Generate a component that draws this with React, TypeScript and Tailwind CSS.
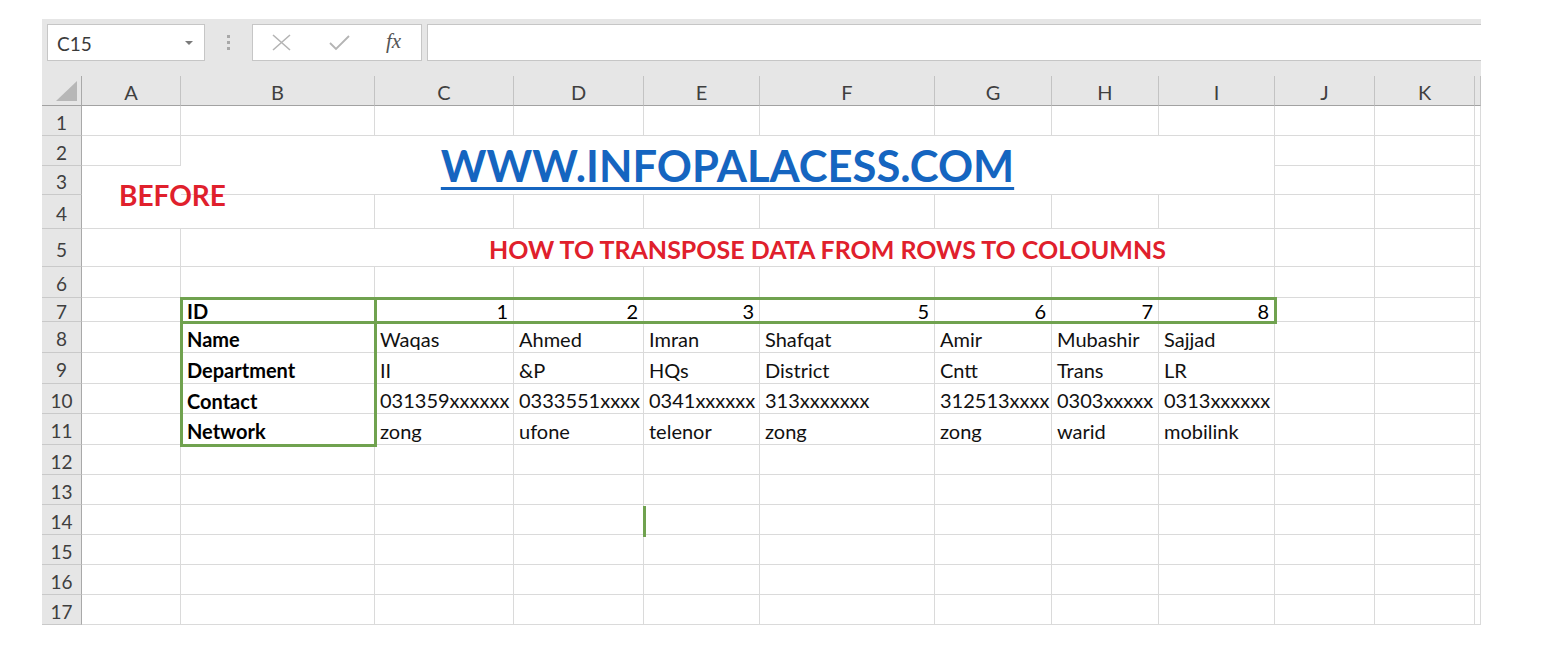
import React from 'react';

const cell = 'border-r border-b border-[#dadada] flex items-center whitespace-nowrap';

function RH({ n }: { n: number }) {
  return (
    <div className="bg-[#e6e6e6] border-r border-r-[#a9a9a9] border-b border-b-[#c9c9c9] flex items-center justify-center pt-[3px] text-[19px] text-[#3f3f3f] leading-none">
      {n}
    </div>
  );
}

function E() {
  return <div className={cell} />;
}

function Empties({ count }: { count: number }) {
  return (
    <>
      {Array.from({ length: count }).map((_, i) => (
        <E key={i} />
      ))}
    </>
  );
}

const headers = ['A', 'B', 'C', 'D', 'E', 'F', 'G', 'H', 'I', 'J', 'K', ''];

const ids = ['1', '2', '3', '5', '6', '7', '8'];
const dataRows: { label: string; vals: string[] }[] = [
  { label: 'Name', vals: ['Waqas', 'Ahmed', 'Imran', 'Shafqat', 'Amir', 'Mubashir', 'Sajjad'] },
  { label: 'Department', vals: ['II', '&P', 'HQs', 'District', 'Cntt', 'Trans', 'LR'] },
  { label: 'Contact', vals: ['031359xxxxxx', '0333551xxxx', '0341xxxxxx', '313xxxxxxx', '312513xxxx', '0303xxxxx', '0313xxxxxx'] },
  { label: 'Network', vals: ['zong', 'ufone', 'telenor', 'zong', 'zong', 'warid', 'mobilink'] },
];

export default function App() {
  return (
    <div className="w-[1552px] h-[665px] bg-white font-['Lato','Open_Sans',sans-serif] text-black overflow-hidden">
      <div className="pt-[19px] pl-[42px]">
        <div className="w-[1439px] bg-[#e6e6e6]">
          {/* formula bar */}
          <div className="flex h-[57px] pt-[5px] items-start">
            <div className="ml-[5px] w-[158px] h-[37px] bg-white border border-[#c6c6c6] flex items-center pl-[9px] pr-[10px]">
              <span className="text-[19px] text-[#3a3a3a] leading-none pt-[2px]">C15</span>
              <svg className="ml-auto" width="10" height="6" viewBox="0 0 10 6">
                <path d="M1 1 L9 1 L5 5 Z" fill="#7a7a7a" />
              </svg>
            </div>
            <div className="w-[47px] h-[37px] flex flex-col items-center justify-center gap-[3px]">
              <div className="w-[3px] h-[3px] bg-[#a8a8a8]" />
              <div className="w-[3px] h-[3px] bg-[#a8a8a8]" />
              <div className="w-[3px] h-[3px] bg-[#a8a8a8]" />
            </div>
            <div className="w-[170px] h-[37px] bg-white border border-[#c6c6c6] flex items-center">
              <svg className="ml-[19px]" width="19" height="17" viewBox="0 0 19 17">
                <path d="M1 1 L18 16 M18 1 L1 16" stroke="#b4b4b4" strokeWidth="1.6" fill="none" />
              </svg>
              <svg className="ml-[38px]" width="21" height="16" viewBox="0 0 21 16">
                <path d="M1 8 L7 14 L20 1" stroke="#b4b4b4" strokeWidth="1.8" fill="none" />
              </svg>
              <span className="ml-[36px] font-['Liberation_Serif',serif] italic text-[21px] text-[#555] leading-none pb-[2px]">
                fx
              </span>
            </div>
            <div className="ml-[5px] flex-1 h-[37px] bg-white border border-[#c6c6c6] border-r-0" />
          </div>

          {/* sheet grid */}
          <div className="relative">
            <div className="grid grid-cols-[40px_99px_194px_139px_130px_116px_175px_117px_107px_116px_100px_100px_6px] grid-rows-[30px_30px_30px_29px_34px_38px_31px_24px_31px_31px_30px_31px_30px_30px_30px_30px_30px_30px] bg-white">
              {/* header row */}
              <div className="bg-[#e6e6e6] border-r border-r-[#a9a9a9] border-b border-b-[#a2a2a2] flex items-end justify-end pr-[4px] pb-[4px]">
                <svg width="21" height="20" viewBox="0 0 21 20">
                  <path d="M21 0 L21 20 L0 20 Z" fill="#b7b7b7" />
                </svg>
              </div>
              {headers.map((h, i) => (
                <div
                  key={i}
                  className="bg-[#e6e6e6] border-r border-r-[#c3c3c3] border-b border-b-[#a2a2a2] flex items-center justify-center pt-[2px] text-[20px] text-[#3f3f3f] leading-none"
                >
                  {h}
                </div>
              ))}

              {/* row 1 */}
              <RH n={1} />
              <Empties count={12} />

              {/* row 2 */}
              <RH n={2} />
              <E />
              <div className={`${cell} col-span-8 row-span-2 justify-center`}>
                <span className="font-bold text-[43.5px] leading-none text-[#1565c0] underline decoration-[3px] underline-offset-[5px] pt-[2px]">
                  WWW.INFOPALACESS.COM
                </span>
              </div>
              <Empties count={3} />

              {/* row 3 */}
              <RH n={3} />
              <div className="border-b border-[#dadada] row-span-2 flex items-center whitespace-nowrap pl-[37px] pb-[4px] relative z-10">
                <span className="font-bold text-[28px] leading-none text-[#e0202c]">BEFORE</span>
              </div>
              <Empties count={3} />

              {/* row 4 */}
              <RH n={4} />
              <Empties count={11} />

              {/* row 5 */}
              <RH n={5} />
              <E />
              <div className={`${cell} col-span-8 pl-[308px]`}>
                <span className="font-bold text-[25px] leading-none text-[#e0202c] pt-[3px]">
                  HOW TO TRANSPOSE DATA FROM ROWS TO COLOUMNS
                </span>
              </div>
              <Empties count={3} />

              {/* row 6 */}
              <RH n={6} />
              <Empties count={12} />

              {/* row 7 */}
              <RH n={7} />
              <E />
              <div className={`${cell} px-[6px] pt-[2px]`}>
                <span className="font-bold text-[20px] leading-none">ID</span>
              </div>
              {ids.map((v, i) => (
                <div key={i} className={`${cell} justify-end pr-[5px] pt-[2px]`}>
                  <span className="text-[20px] leading-none">{v}</span>
                </div>
              ))}
              <Empties count={3} />

              {/* rows 8-11 */}
              {dataRows.map((r, ri) => (
                <React.Fragment key={ri}>
                  <RH n={8 + ri} />
                  <E />
                  <div className={`${cell} px-[6px] pt-[4px]`}>
                    <span className="font-bold text-[20px] leading-none">{r.label}</span>
                  </div>
                  {r.vals.map((v, i) => (
                    <div key={i} className={`${cell} px-[5px] pt-[3px]`}>
                      <span className="text-[20px] leading-none text-[#111]">{v}</span>
                    </div>
                  ))}
                  <Empties count={3} />
                </React.Fragment>
              ))}

              {/* rows 12-17 */}
              {[12, 13, 14, 15, 16, 17].map((n) => (
                <React.Fragment key={n}>
                  <RH n={n} />
                  <Empties count={12} />
                </React.Fragment>
              ))}
            </div>

            {/* green selection outlines */}
            <div className="absolute left-[138px] top-[221px] w-[197px] h-[150px] border-[3px] border-[#70a24f] pointer-events-none z-20" />
            <div className="absolute left-[138px] top-[221px] w-[1097px] h-[27px] border-[3px] border-[#70a24f] pointer-events-none z-20" />
            <div className="absolute left-[601px] top-[430px] w-[3px] h-[31px] bg-[#70a24f] pointer-events-none z-20" />
          </div>
        </div>
      </div>
    </div>
  );
}
